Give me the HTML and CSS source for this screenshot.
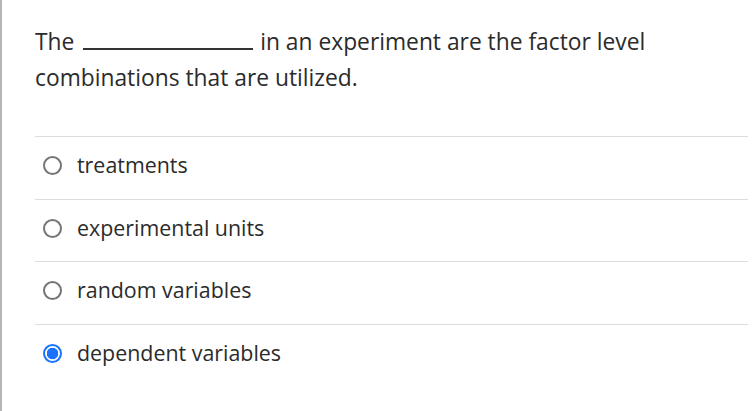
FILE: index.html
```html
<!DOCTYPE html>
<html>
<head>
<meta charset="utf-8">
<link rel="stylesheet" href="styles.css">
</head>
<body>
<div class="page">
  <p class="question">The <span class="blank"></span> in an experiment are the factor level combinations that are utilized.</p>
  <div class="options">
    <label class="option"><span class="radio"></span><span class="label">treatments</span></label>
    <label class="option"><span class="radio"></span><span class="label">experimental units</span></label>
    <label class="option"><span class="radio"></span><span class="label">random variables</span></label>
    <label class="option"><span class="radio checked"></span><span class="label">dependent variables</span></label>
  </div>
</div>
</body>
</html>
```

FILE: styles.css
```css
html, body {
  margin: 0;
  padding: 0;
  background: #fff;
}
body {
  font-family: "Open Sans", Lato, sans-serif;
  color: #2b2b2b;
  width: 752px;
  height: 411px;
  overflow: hidden;
}
.page {
  border-left: 2px solid #b5b5b5;
  height: 411px;
  box-sizing: border-box;
  padding: 24px 4px 0 33px;
}
.question {
  margin: 0;
  font-size: 22.8px;
  line-height: 36px;
  width: 640px;
}
.blank {
  display: inline-block;
  width: 170px;
  height: 2px;
  background: #333;
  vertical-align: 0;
  margin: 0 1px 0 3px;
}
.options {
  margin-top: 40px;
}
.option {
  display: flex;
  align-items: center;
  height: 63px;
  padding-bottom: 5px;
  box-sizing: border-box;
  border-top: 1px solid #dcdcdc;
  font-size: 21.4px;
}
.option:nth-child(even) {
  height: 62px;
}
.radio {
  width: 15px;
  height: 15px;
  border: 2px solid #757575;
  border-radius: 50%;
  margin-left: 8px;
  margin-right: 15px;
  box-sizing: content-box;
  flex: none;
}
.radio.checked {
  border-color: #1a73ff;
  background: radial-gradient(circle, #1a73ff 0 5.5px, #fff 6px);
}
.label {
  position: relative;
  top: -1px;
}
```
